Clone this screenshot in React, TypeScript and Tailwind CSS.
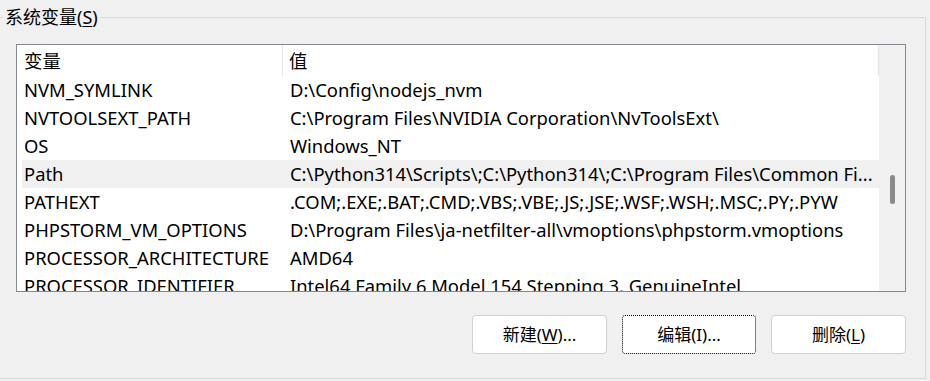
import React from 'react';

interface EnvVar {
  name: string;
  value: string;
}

const rows: EnvVar[] = [
  { name: 'NVM_SYMLINK', value: 'D:\\Config\\nodejs_nvm' },
  { name: 'NVTOOLSEXT_PATH', value: 'C:\\Program Files\\NVIDIA Corporation\\NvToolsExt\\' },
  { name: 'OS', value: 'Windows_NT' },
  { name: 'Path', value: 'C:\\Python314\\Scripts\\;C:\\Python314\\;C:\\Program Files\\Common Fi...' },
  { name: 'PATHEXT', value: '.COM;.EXE;.BAT;.CMD;.VBS;.VBE;.JS;.JSE;.WSF;.WSH;.MSC;.PY;.PYW' },
  { name: 'PHPSTORM_VM_OPTIONS', value: 'D:\\Program Files\\ja-netfilter-all\\vmoptions\\phpstorm.vmoptions' },
  { name: 'PROCESSOR_ARCHITECTURE', value: 'AMD64' },
  { name: 'PROCESSOR_IDENTIFIER', value: 'Intel64 Family 6 Model 154 Stepping 3, GenuineIntel' },
];

const font = "font-['Noto_Sans','Noto_Sans_CJK_SC',sans-serif]";

const App: React.FC = () => {
  return (
    <div className={`w-[930px] h-[381px] bg-[#f0f0f0] overflow-hidden text-black ${font}`}>
      <div className="relative mt-[17px] w-[926px] h-[362px] border-t border-r border-b border-[#dadada] pt-[26px] pl-[16px]">
        {/* group title over the frame line */}
        <div className="absolute left-[3px] top-[-12px] px-[2px] bg-[#f0f0f0] text-[18px] leading-[22px]">
          系统变量(<span className="underline underline-offset-2">S</span>)
        </div>

        {/* list view */}
        <div className="w-[890px] h-[248px] border border-[#828790] bg-white flex overflow-hidden">
          <div className="w-[862px] flex flex-col">
            <div className="h-[31px] flex items-stretch shrink-0 text-[18.4px]">
              <div className="w-[266px] pl-[7px] flex items-center border-r border-[#e5e5e5]">变量</div>
              <div className="flex-1 pl-[6px] flex items-center border-r border-[#e5e5e5]">值</div>
            </div>
            <div className="pl-[5px]">
              {rows.map((r) => (
                <div
                  key={r.name}
                  className={`h-[28px] flex items-center text-[18.4px] leading-[28px] whitespace-nowrap ${
                    r.name === 'Path' ? 'bg-[#f0f0f0]' : ''
                  }`}
                >
                  <div className="w-[261px] pl-[2px] overflow-hidden">{r.name}</div>
                  <div className="flex-1 pl-[7px] overflow-hidden">{r.value}</div>
                </div>
              ))}
            </div>
          </div>
          {/* scrollbar */}
          <div className="flex-1 bg-[#f0f0f0] relative">
            <div className="absolute left-[11px] top-[130px] w-[5px] h-[29px] rounded-full bg-[#8a8a8a]" />
          </div>
        </div>

        {/* buttons */}
        <div className="w-[890px] mt-[23px] flex justify-end gap-[15px] text-[17px]">
          <button className="w-[135px] h-[39px] bg-white border border-[#d0d0d0] rounded-[4px]">
            新建(<span className="underline underline-offset-2">W</span>)...
          </button>
          <button className="w-[134px] h-[39px] bg-white border border-dotted border-black rounded-[3px]">
            编辑(I)...
          </button>
          <button className="w-[135px] h-[39px] bg-white border border-[#d0d0d0] rounded-[4px]">
            删除(<span className="underline underline-offset-2">L</span>)
          </button>
        </div>
      </div>
    </div>
  );
};

export default App;
